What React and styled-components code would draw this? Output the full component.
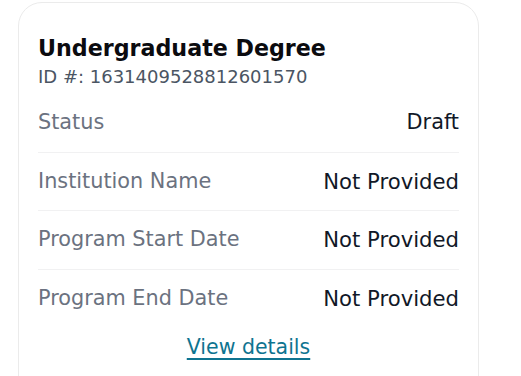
import React from "react";
import styled, {createGlobalStyle} from "styled-components";

const GlobalStyle = createGlobalStyle`
  html, body {
    margin: 0;
    padding: 0;
    background: #ffffff;
  }
  body {
    font-family: "DejaVu Sans", "Liberation Sans", sans-serif;
  }
`;

const Page = styled.div`
  padding: 2px 0 0 18px;
  height: 376px;
  overflow: hidden;
  box-sizing: border-box;
`;

const Card = styled.div`
  width: 461px;
  min-height: 400px;
  box-sizing: border-box;
  border: 1px solid #ebebeb;
  border-radius: 24px;
  padding: 31px 19px 0 19px;
  background: #fff;
`;

const Title = styled.h2`
  margin: 0;
  font-size: 22.2px;
  line-height: 28px;
  font-weight: 700;
  color: #0b0b0f;
`;

const Ident = styled.div`
  margin-top: 4px;
  font-size: 18px;
  line-height: 22px;
  color: #4b5563;
`;

const List = styled.dl`
  margin: 6px 0 0 0;
`;

const Row = styled.div`
  display: flex;
  justify-content: space-between;
  align-items: center;
  padding: 15px 0;
  line-height: 27.5px;
  font-size: 20.8px;
  border-bottom: 1px solid ${({$last}) => ($last ? "transparent" : "#f1f1f2")};
`;

const Label = styled.dt`
  color: #6b7280;
`;

const Value = styled.dd`
  margin: 0;
  color: #111827;
  font-size: ${({$wide}) => ($wide ? "21.2px" : "20.8px")};
`;

const Footer = styled.div`
  display: flex;
  justify-content: center;
  padding-top: 7px;
`;

const DetailsLink = styled.a`
  font-size: 20.5px;
  color: #0e7490;
  text-decoration: underline;
  text-underline-offset: 4px;
  cursor: pointer;
`;

const rows = [
  {label: "Status", value: "Draft"},
  {label: "Institution Name", value: "Not Provided"},
  {label: "Program Start Date", value: "Not Provided"},
  {label: "Program End Date", value: "Not Provided"},
];

export default function App() {
  return (
    <Page>
      <GlobalStyle/>
      <Card>
        <Title>Undergraduate Degree</Title>
        <Ident>ID #: 1631409528812601570</Ident>
        <List>
          {rows.map((r, i) => (
            <Row key={r.label} $last={i === rows.length - 1}>
              <Label>{r.label}</Label>
              <Value $wide={r.value !== "Draft"}>{r.value}</Value>
            </Row>
          ))}
        </List>
        <Footer>
          <DetailsLink>View details</DetailsLink>
        </Footer>
      </Card>
    </Page>
  );
}
